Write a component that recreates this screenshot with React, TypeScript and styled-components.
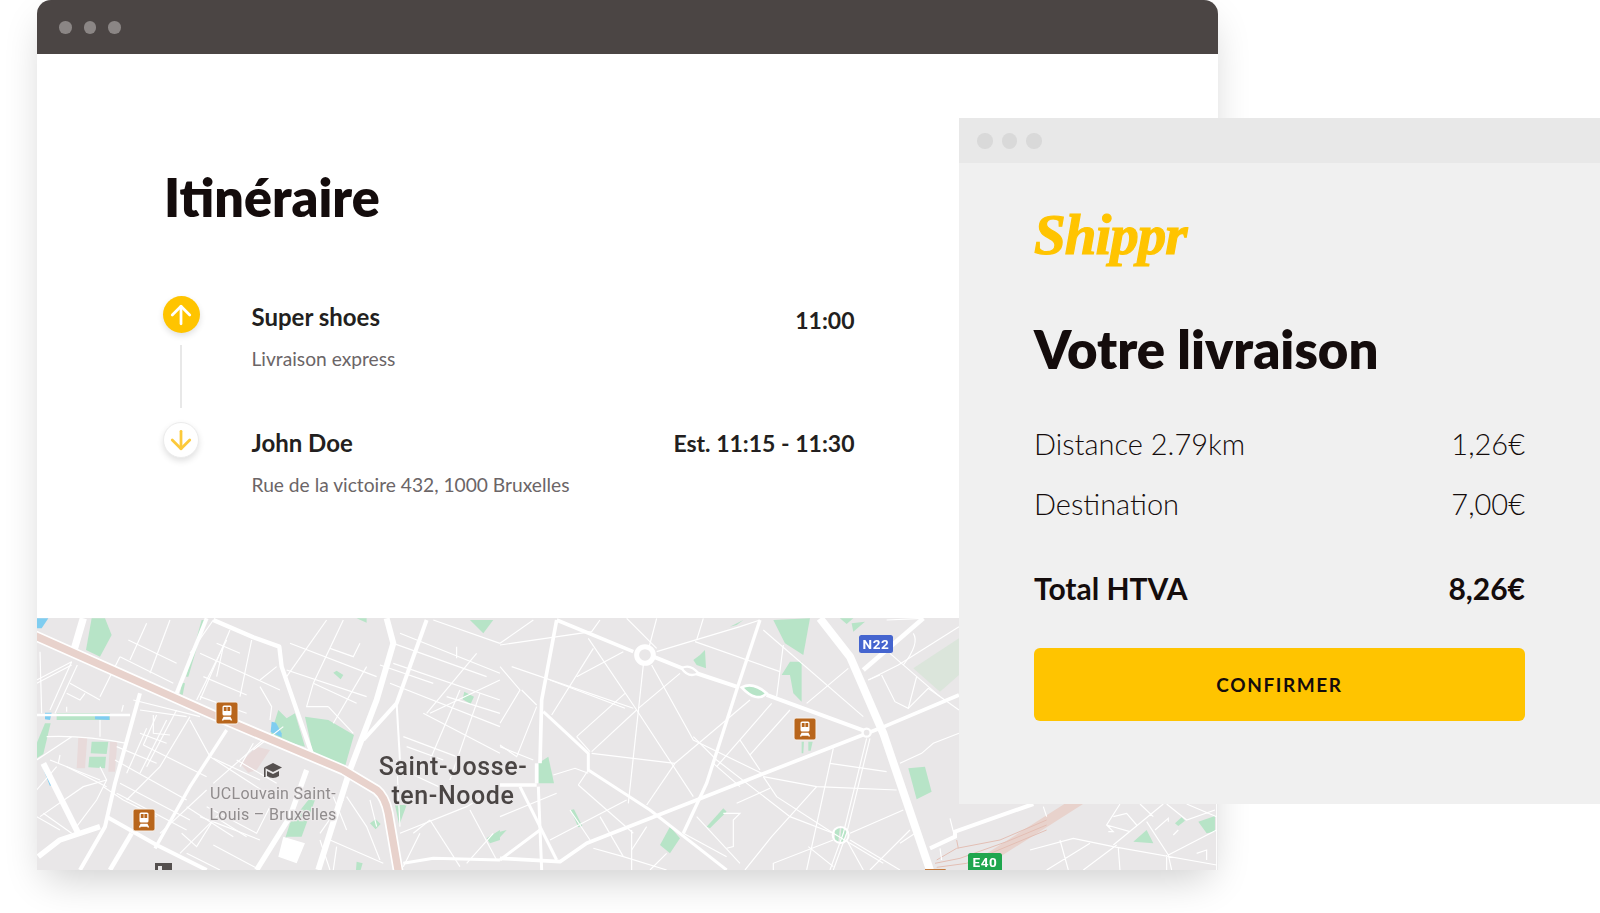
import styled, { createGlobalStyle } from 'styled-components';
import { ArrowUp, ArrowDown } from 'lucide-react';

const FONT = `Lato, 'Noto Sans', sans-serif`;

// map geometry is traced in the coordinates of 3x crops, each group has its own origin
const WHITE_A: [string, number][] = [
    ['M250,55 L222,150', 22],
    ['M620,55 L530,280', 12],
    ['M640,60 L760,112 L838,140 L845,200 L935,460', 13],
    ['M1160,55 L1180,130 L1130,300 L1050,510 L955,810', 18],
    ['M1280,60 L1190,310 L1090,420', 12],
    ['M420,280 L345,550 L315,680 L240,810', 12],
    ['M680,390 L570,560 L465,745', 10],
    ['M320,650 L470,735 L620,810', 12],
    ['M115,770 L180,720 L300,680', 16],
    ['M130,490 L235,700', 18],
    ['M920,510 L870,650 L770,810', 16],
    ['M395,700 L330,810', 14],
    ['M110,345 H390', 7],
    ['M1190,310 L1200,480', 6],
    ['M1210,790 L1300,775 L1500,780', 9],
];
const THIN_A = [
    'M110,240 L215,185', 'M110,250 L215,195', 'M215,185 L150,330', 'M232,195 L165,340', 'M120,155 L125,340',
    'M210,250 L300,300', 'M255,280 L240,300 L200,280', 'M385,120 L530,190', 'M360,170 L520,250', 'M300,290 L360,170',
    'M600,160 L840,270', 'M510,60 L450,220', 'M440,70 L390,180', 'M690,90 L600,300', 'M755,120 L720,290',
    'M140,410 Q250,405 380,430', 'M120,650 L250,560 L320,540', 'M200,500 L320,560', 'M110,570 L170,500',
    'M150,480 L300,540', 'M400,300 L600,350', 'M420,330 L560,350', 'M430,435 L620,530', 'M470,345 L430,435',
    'M530,330 L440,500', 'M570,350 L480,500 L380,600', 'M570,360 L630,470 L800,580', 'M640,475 L780,540',
    'M350,580 L560,690', 'M360,550 L570,660', 'M480,700 L620,570', 'M600,650 L780,720', 'M540,760 L660,640',
    'M640,735 L780,810', 'M1040,590 L1100,680 L1140,780', 'M990,720 L1150,790', 'M1010,740 L1000,810',
    'M1190,480 L1200,680', 'M1200,700 L1400,620 L1500,560', 'M1290,660 L1380,800', 'M1240,700 L1290,660',
    'M1140,195 L1300,250', 'M1180,130 L1460,230', 'M1200,100 L1500,220', 'M1180,190 L1500,300', 'M1170,250 L1500,380',
    'M1270,340 L1500,460', 'M1290,340 L1500,240', 'M1430,160 L1280,340', 'M1380,270 L1290,480', 'M1440,280 L1350,540',
    'M870,130 L1130,230', 'M860,210 L1100,290', 'M940,250 L1070,310', 'M980,60 L860,230', 'M1080,130 L1060,170 L990,145',
    'M1100,200 L1000,370', 'M940,250 L920,320 L985,320', 'M1030,60 L940,250', 'M985,320 L1060,400', 'M780,240 L830,200',
    'M780,260 L815,320 L810,360', 'M110,480 L215,410', 'M130,640 L215,700', 'M1410,630 L1490,780', 'M1210,800 L1260,700',
    'M1300,60 L1500,130', 'M1370,140 L1370,175', 'M570,160 L640,60', 'M850,380 L760,450', 'M1110,600 L1130,680',
    'M560,760 L660,810', 'M1030,600 L960,700', 'M1400,790 L1480,700', 'M680,120 L640,200 L590,300',
    'M350,440 L470,490', 'M420,400 L500,430', 'M440,385 L380,520', 'M500,360 L420,520', 'M345,480 L560,600',
    'M310,560 L370,600 L470,650', 'M180,690 L110,650', 'M300,500 L320,540 L290,600 L230,680', 'M810,620 L770,700 L620,620',
    'M560,620 L700,710', 'M545,700 L590,740 L640,660', 'M660,660 L740,710', 'M610,230 L740,285', 'M650,130 L720,160',
    'M600,290 L740,340', 'M670,140 L650,230', 'M800,410 L640,550', 'M710,480 L830,550', 'M760,430 L720,500',
    'M1000,590 L1040,690', 'M960,720 L990,810', 'M1340,290 L1500,340', 'M1220,440 L1330,480', 'M1230,520 L1380,590',
    'M1210,410 L1370,470', 'M300,360 V410', 'M180,465 L175,490', 'M200,320 V335', 'M370,315 L365,335', 'M460,345 V400 L510,405',
];
const WHITE_B: [string, number][] = [
    ['M170,60 L400,155', 11],
    ['M460,170 L560,210 L710,260', 12],
    ['M800,285 L1100,395', 12],
    ['M780,60 L710,270 L620,550 L550,700', 10],
    ['M170,60 L125,300 L120,490', 11],
    ['M130,335 L265,460 L265,510 L450,630 L680,810', 9],
    ['M960,55 L1050,170 L1150,400 L1290,810', 24],
    ['M1270,55 L1090,210', 14],
    ['M1377,285 L1140,385 L780,525 L590,600 L260,730 L180,785 L0,775', 11],
    ['M0,555 L110,555', 11],
    ['M110,490 L110,550', 11],
    ['M60,560 L170,780', 9],
    ['M115,560 L125,810', 9],
    ['M0,780 L120,690', 9],
];
const THIN_B = [
    'M100,60 L0,130', 'M300,60 L275,95 L0,135', 'M380,55 L470,145', 'M470,55 L445,150', 'M610,55 L590,120',
    'M470,155 L720,80 L780,60', 'M585,125 L840,215', 'M265,115 L410,330 L580,590', 'M280,145 L155,345', 'M370,155 L230,230',
    'M35,200 L400,325', 'M375,280 L230,410', 'M410,330 L275,455', 'M430,195 L385,610', 'M275,460 L525,490', 'M525,490 L750,300',
    'M455,195 L580,420 L785,520', 'M540,220 L415,325', 'M850,135 L830,290', 'M790,90 L1090,350', 'M1045,205 L920,310',
    'M815,310 L650,500', 'M870,330 L750,465', 'M580,410 L650,480 L870,650 L1000,700', 'M525,490 L440,615', 'M790,530 L830,590 L1000,700',
    'M790,530 L950,560 L1190,570', 'M990,490 L1160,515', 'M1000,445 L920,810', 'M1100,415 L1030,700 L990,810', 'M1110,415 L1040,700 L1000,810',
    'M1050,700 L1210,630', 'M950,560 L815,710 L735,810', 'M1040,720 L1090,810', 'M1050,720 L1200,810', 'M1230,690 L1110,810',
    'M0,650 L170,580', 'M235,555 L400,700', 'M235,555 L265,510', 'M380,600 L150,720', 'M160,525 L225,505 L265,520',
    'M300,650 L370,770', 'M210,630 L270,720', 'M395,690 L395,810', 'M280,745 L370,770 L500,810', 'M440,680 L395,750',
    'M500,760 L450,810', 'M590,650 L720,790', 'M670,640 H720 L700,660 V740 L680,745', 'M1105,240 L1195,195 L1377,80',
    'M1145,225 L1185,305 L1225,325 L1250,230', 'M1170,160 L1320,290', 'M1240,100 Q1260,130 1210,195', 'M1225,325 L1285,265 L1377,330',
    'M1200,490 L1265,460 L1300,430 L1377,400', 'M710,610 L810,565', 'M0,200 L60,270 L0,370', 'M65,270 L110,315', 'M0,435 L50,470 L110,320',
    'M720,420 L780,510', 'M230,410 L270,455', 'M1000,700 L1150,790', 'M820,810 L820,790 L1000,720', 'M640,490 L720,560', 'M1140,225 L1105,240',
    'M925,740 L1000,800', 'M1270,55 L1160,60', 'M150,240 L375,325', 'M550,700 L680,770', 'M0,440 L100,480',
];
const GREEN_PATCHES = [
    // first crop
    { o: 'a', p: '275,55 315,55 335,105 300,170 258,150' },
    { o: 'a', p: '810,410 835,330 860,355 885,340 915,440' },
    { o: 'a', p: '915,350 985,360 1062,405 1035,500 940,465' },
    { o: 'a', p: '170,340 330,340 330,360 170,360' },
    { o: 'a', p: '135,370 152,370 130,462 110,475 110,430' },
    { o: 'a', p: '275,425 325,425 320,462 272,460' },
    { o: 'a', p: '268,470 318,470 315,505 265,502' },
    { o: 'a', p: '1000,218 1010,212 1030,225 1022,238' },
    { o: 'a', p: '1393,275 1422,290 1412,312 1388,298' },
    { o: 'a', p: '1410,60 1480,60 1450,100' },
    { o: 'a', p: '1185,615 1220,615 1198,675' },
    { o: 'a', p: '1460,715 1500,690 1500,720 1470,730' },
    { o: 'a', p: '870,670 925,600 945,600 905,710 860,710 838,770' },
    { o: 'a', p: '1110,670 1127,658 1142,672 1127,688' },
    { o: 'a', p: '1070,785 1088,790 1082,810 1068,810' },
    { o: 'a', p: '605,60 615,60 565,230 558,230' },
    { o: 'a', p: '545,248 555,250 548,285 540,282' },
    { o: 'a', p: '1070,55 1100,55 1100,68' },
    // second crop
    { o: 'b', p: '820,60 930,55 910,165 855,130' },
    { o: 'b', p: '870,185 905,185 905,305 880,280 870,225 845,225' },
    { o: 'b', p: '1225,505 1275,500 1295,575 1250,598' },
    { o: 'b', p: '620,680 670,625 680,635 630,685' },
    { o: 'b', p: '510,680 540,715 510,760 480,735' },
    { o: 'b', p: '115,490 145,470 162,550 115,550' },
    { o: 'b', p: '580,180 600,165 615,150 618,205 590,195' },
    { o: 'b', p: '212,630 222,628 247,678 235,682' },
    { o: 'b', p: '1020,55 1060,55 1040,72' },
    { o: 'b', p: '1055,70 1095,65 1060,95' },
    { o: 'b', p: '690,80 730,60 710,75' },
    { o: 'b', p: '905,425 912,425 910,460 905,460' },
    { o: 'b', p: '925,425 938,425 932,452 925,452' },
    { o: 'b', p: '1005,690 1020,680 1015,725 1005,720' },
    { o: 'b', p: '1025,680 1040,695 1030,725 1020,725' },
    { o: 'b', p: '730,265 790,275 770,290 745,285' },
    { o: 'b', p: '0,695 20,690 0,712' },
];
const BLUE_PATCHES = [
    '110,55 145,55 125,85 110,85',
    '135,338 155,338 150,360 135,358',
    '285,345 328,347 328,360 285,358',
    '815,365 828,368 845,400 845,412 812,396',
    '125,495 135,492 160,550 150,558',
];
const TRAINS: [number, number][] = [
    [216, 702],
    [133, 809],
    [794, 718],
];

function TrainMarker({ x, y }: { x: number; y: number }) {
    return (
        <g transform={`translate(${x},${y})`}>
            <rect x="0" y="0" width="22" height="22" rx="2" fill="#b8651b" stroke="#f6f1ec" strokeWidth="1" />
            <rect x="6.5" y="3.5" width="9" height="10" rx="1.5" fill="#fff" />
            <rect x="7.8" y="5" width="2.8" height="4" fill="#b8651b" />
            <rect x="11.4" y="5" width="2.8" height="4" fill="#b8651b" />
            <path d="M6.5,18.5 L8,15.5 H14 L15.5,18.5 M7,17 H15" stroke="#fff" strokeWidth="1.5" fill="none" />
        </g>
    );
}

function MapDrawing() {
    return (
        <MapSvg viewBox="37 618 1181 252" width="1181" height="252">
            <rect x="37" y="618" width="1181" height="252" fill="#e9e7e8" />
            <g transform="translate(0,600) scale(0.3333)">
                <path d="M720,490 L770,440 L810,450 L770,510 L745,518 Z" fill="#e8dada" />
                <path d="M235,412 L262,412 L255,505 L230,505 Z M330,425 L352,425 L345,515 L325,515 Z" fill="#e8dada" />
                {GREEN_PATCHES.filter((g) => g.o === 'a').map((g) => (
                    <polygon key={g.p} points={g.p} fill="#b7e4c7" />
                ))}
                {BLUE_PATCHES.map((p) => (
                    <polygon key={p} points={p} fill="#7fcdf0" />
                ))}
                {THIN_A.map((d) => (
                    <path key={d} d={d} stroke="#fff" strokeWidth="3.5" fill="none" />
                ))}
                {WHITE_A.map(([d, w]) => (
                    <path key={d} d={d} stroke="#fff" strokeWidth={w} fill="none" strokeLinejoin="round" />
                ))}
                <path d="M850,710 L915,730 L890,790 L835,770 Z" fill="#fff" />
                <path
                    d="M100,105 L640,345 L1030,510 L1130,570 Q1155,590 1165,640 L1195,815"
                    stroke="#fff"
                    strokeWidth="32"
                    fill="none"
                />
                <path
                    d="M100,105 L640,345 L1030,510 L1130,570 Q1155,590 1165,640 L1195,815"
                    stroke="#e8d2cc"
                    strokeWidth="22"
                    fill="none"
                />
            </g>
            <g transform="translate(500,600) scale(0.3333)">
                <polygon points="1240,205 1377,115 1377,225 1320,275" fill="#dbe5db" />
                {GREEN_PATCHES.filter((g) => g.o === 'b').map((g) => (
                    <polygon key={g.p} points={g.p} fill="#b7e4c7" />
                ))}
                {THIN_B.map((d) => (
                    <path key={d} d={d} stroke="#fff" strokeWidth="3.5" fill="none" />
                ))}
                {WHITE_B.map(([d, w]) => (
                    <path key={d} d={d} stroke="#fff" strokeWidth={w} fill="none" strokeLinejoin="round" />
                ))}
                <circle cx="435" cy="165" r="25" stroke="#fff" strokeWidth="15" fill="#e9e7e8" />
                <path d="M725,262 Q760,245 800,280 Q770,310 725,262 Z" fill="#b7e4c7" stroke="#fff" strokeWidth="8" />
                <path d="M545,205 Q570,190 595,220 Q565,235 545,205 Z" fill="#e9e7e8" stroke="#fff" strokeWidth="7" />
                <circle cx="1022" cy="705" r="24" stroke="#fff" strokeWidth="6" fill="none" />
                <circle cx="1100" cy="398" r="12" stroke="#fff" strokeWidth="7" fill="#e9e7e8" />
            </g>
            <g transform="translate(900,780) scale(0.3333)">
                <polygon points="700,185 740,150 760,190" fill="#b7e4c7" />
                <polygon points="825,130 845,112 855,122 835,138" fill="#b7e4c7" />
                <polygon points="895,125 945,108 945,155 920,160" fill="#b7e4c7" />
                <path d="M210,270 L540,60" stroke="#e8d2cc" strokeWidth="30" fill="none" />
                <path
                    d="M110,240 L170,205 L300,180 L440,120 M105,250 L180,235 L320,185 L440,135 M110,262 L200,250 L440,150 M170,180 L175,205"
                    stroke="#e3bfb5"
                    strokeWidth="3"
                    fill="none"
                />
                <path d="M90,205 L165,170 L165,155 L400,72" stroke="#fff" strokeWidth="12" fill="none" />
                <path
                    d="M390,210 L520,175 L640,200 L950,255 M550,270 L650,195 M660,72 L620,135 L690,155 M640,195 L790,72 M480,180 L505,270 M655,205 L660,270 M740,125 L805,225 L815,270 M805,225 L950,150 M800,225 L800,270 M860,72 L950,110 M640,110 L680,100 L710,135 M720,72 L760,110 M890,220 L920,210 V240 M440,270 L570,190 M620,135 L640,155 L625,155 M765,150 L805,115 V125 M820,165 L835,150 M150,115 L160,155 M120,205 L125,240 M430,80 L440,110 M0,190 L60,150 M800,72 L860,120 L945,90"
                    stroke="#fff"
                    strokeWidth="3.5"
                    fill="none"
                />
                <path d="M950,72 V270" stroke="#fff" strokeWidth="3" fill="none" />
                <rect x="75" y="267" width="62" height="6" fill="#c47a3c" />
            </g>
            {TRAINS.map(([x, y]) => (
                <TrainMarker key={x} x={x} y={y} />
            ))}
            <g transform="translate(264,763)">
                <path d="M9,0 L18,4.5 L9,9 L0,4.5 Z" fill="#55504f" />
                <path d="M3,8 V13 Q9,17 15,13 V8 L9,11 Z" fill="#55504f" />
                <rect x="0" y="5" width="1.6" height="9" fill="#55504f" />
            </g>
            <path d="M155,863 h17 v7 h-17 z M158,866 h4 v4 h-4 z" fill="#55504f" fillRule="evenodd" />
            <BlockLabel x="453" y="775">Saint-Josse-</BlockLabel>
            <BlockLabel x="453" y="804">ten-Noode</BlockLabel>
            <PoiLabel x="273" y="799">UCLouvain Saint-</PoiLabel>
            <PoiLabel x="273" y="820">Louis – Bruxelles</PoiLabel>
            <rect x="859" y="635" width="34" height="18" rx="2.5" fill="#4565cf" />
            <RoadNumber x="876" y="649">N22</RoadNumber>
            <rect x="968" y="853" width="34" height="19" rx="2.5" fill="#1fa64e" />
            <RoadNumber x="985" y="867">E40</RoadNumber>
        </MapSvg>
    );
}

export default function App() {
    return (
        <Page>
            <GlobalStyle />
            <MainWindow>
                <TitleBar $dark>
                    <Dot $dark />
                    <Dot $dark />
                    <Dot $dark />
                </TitleBar>
                <Content>
                    <Title>Itinéraire</Title>
                    <Stops>
                        <Stop>
                            <Rail>
                                <StopIcon $filled>
                                    <ArrowUp size={30} strokeWidth={2.2} color="#fff" />
                                </StopIcon>
                                <Connector />
                            </Rail>
                            <StopText>
                                <StopName>Super shoes</StopName>
                                <StopDetail>Livraison express</StopDetail>
                            </StopText>
                            <StopTime $low>11:00</StopTime>
                        </Stop>
                        <Stop>
                            <Rail>
                                <StopIcon>
                                    <ArrowDown size={30} strokeWidth={2.2} color="#fcc93a" />
                                </StopIcon>
                            </Rail>
                            <StopText>
                                <StopName>John Doe</StopName>
                                <StopDetail>Rue de la victoire 432, 1000 Bruxelles</StopDetail>
                            </StopText>
                            <StopTime>Est. 11:15 - 11:30</StopTime>
                        </Stop>
                    </Stops>
                </Content>
                <MapArea>
                    <MapDrawing />
                </MapArea>
            </MainWindow>
            <SummaryWindow>
                <TitleBar>
                    <Dot />
                    <Dot />
                    <Dot />
                </TitleBar>
                <SummaryBody>
                    <Logo>Shippr</Logo>
                    <SummaryTitle>Votre livraison</SummaryTitle>
                    <PriceRow>
                        <span>Distance 2.79km</span>
                        <span>1,26€</span>
                    </PriceRow>
                    <PriceRow>
                        <span>Destination</span>
                        <span>7,00€</span>
                    </PriceRow>
                    <TotalRow>
                        <span>Total HTVA</span>
                        <span>8,26€</span>
                    </TotalRow>
                    <ConfirmButton>CONFIRMER</ConfirmButton>
                </SummaryBody>
            </SummaryWindow>
        </Page>
    );
}

const GlobalStyle = createGlobalStyle`
    html, body {
        margin: 0;
        padding: 0;
        background: #fff;
    }
`;
const Page = styled.div`
    position: relative;
    width: 1600px;
    height: 913px;
    overflow: hidden;
    padding-left: 37px;
    box-sizing: border-box;
    font-family: ${FONT};
    background: #fff;
`;
const MainWindow = styled.div`
    display: flex;
    flex-direction: column;
    width: 1181px;
    height: 870px;
    background: #fff;
    border-radius: 14px 14px 0 0;
    box-shadow: 0 16px 40px -8px rgba(0, 0, 0, 0.2);
`;
const TitleBar = styled.div<{ $dark?: boolean }>`
    display: flex;
    flex: none;
    align-items: center;
    gap: ${(props) => (props.$dark ? '12px' : '9px')};
    height: ${(props) => (props.$dark ? '54px' : '45px')};
    padding-left: ${(props) => (props.$dark ? '22px' : '18px')};
    padding-top: ${(props) => (props.$dark ? '0' : '1px')};
    box-sizing: border-box;
    background: ${(props) => (props.$dark ? '#4b4544' : '#e8e8e8')};
    border-radius: ${(props) => (props.$dark ? '14px 14px 0 0' : '0')};
`;
const Dot = styled.span<{ $dark?: boolean }>`
    width: ${(props) => (props.$dark ? '12.5px' : '15.5px')};
    height: ${(props) => (props.$dark ? '12.5px' : '15.5px')};
    margin-top: ${(props) => (props.$dark ? '1px' : '0')};
    border-radius: 50%;
    background: ${(props) => (props.$dark ? '#8b8685' : '#d9d9d9')};
`;
const Content = styled.div`
    flex: 1;
    padding: 111px 0 0 125px;
`;
const Title = styled.h1`
    margin: 0 0 67px 2px;
    font-size: 52px;
    line-height: 64px;
    font-weight: 800;
    color: #140c0c;
`;
const Stops = styled.div`
    display: flex;
    flex-direction: column;
    width: 692.5px;
`;
const Stop = styled.div`
    display: grid;
    grid-template-columns: 89.5px 1fr auto;
    height: 126px;
`;
const Rail = styled.div`
    display: flex;
    flex-direction: column;
    align-items: center;
    width: 38px;
`;
const StopIcon = styled.div<{ $filled?: boolean }>`
    display: flex;
    flex: none;
    align-items: center;
    justify-content: center;
    width: ${(props) => (props.$filled ? '37px' : '36px')};
    height: ${(props) => (props.$filled ? '37px' : '36px')};
    box-sizing: border-box;
    border-radius: 50%;
    background: ${(props) => (props.$filled ? '#ffc400' : '#fff')};
    border: ${(props) => (props.$filled ? 'none' : '1px solid #ececec')};
    box-shadow: 0 3px 6px rgba(0, 0, 0, 0.12);
`;
const Connector = styled.div`
    flex: none;
    width: 2px;
    height: 63px;
    margin-top: 12px;
    background: #e8e8e8;
`;
const StopText = styled.div`
    padding-top: 7px;
`;
const StopName = styled.div`
    font-size: 24px;
    line-height: 28px;
    font-weight: 700;
    color: #231f20;
`;
const StopDetail = styled.div`
    margin-top: 16px;
    font-size: 19.2px;
    line-height: 24px;
    font-weight: 400;
    color: #6b6567;
`;
const StopTime = styled.div<{ $low?: boolean }>`
    padding-top: ${(props) => (props.$low ? '10px' : '7px')};
    font-size: 23px;
    line-height: 28px;
    font-weight: 700;
    color: #231f20;
`;
const MapArea = styled.div`
    flex: none;
    height: 252px;
`;
const MapSvg = styled.svg`
    display: block;
    filter: blur(0.35px);
`;
const BlockLabel = styled.text`
    font-family: Roboto, sans-serif;
    font-size: 25px;
    font-weight: 500;
    letter-spacing: 0.6px;
    text-anchor: middle;
    fill: #4a4544;
    stroke: #e9e7e8;
    stroke-width: 3px;
    paint-order: stroke;
`;
const PoiLabel = styled.text`
    font-family: Roboto, sans-serif;
    font-size: 16px;
    letter-spacing: 0.3px;
    text-anchor: middle;
    fill: #908c8d;
    stroke: #ece9ea;
    stroke-width: 2.5px;
    paint-order: stroke;
`;
const RoadNumber = styled.text`
    font-family: Roboto, sans-serif;
    font-size: 13.5px;
    font-weight: 700;
    letter-spacing: 0.6px;
    text-anchor: middle;
    fill: #fff;
`;
const SummaryWindow = styled.div`
    position: absolute;
    top: 118px;
    right: 0;
    width: 641px;
    height: 686px;
    background: #f0f0f0;
`;
const SummaryBody = styled.div`
    display: flex;
    flex-direction: column;
    padding: 42px 75px 0;
`;
const Logo = styled.div`
    height: 66px;
    font-family: 'Liberation Serif', serif;
    font-style: italic;
    font-weight: 700;
    font-size: 57px;
    line-height: 60px;
    letter-spacing: -1px;
    color: #ffc400;
    -webkit-text-stroke: 1.2px #ffc400;
`;
const SummaryTitle = styled.h2`
    margin: 46px 0 41px;
    font-size: 52.6px;
    line-height: 64px;
    font-weight: 800;
    color: #140c0c;
`;
const PriceRow = styled.div`
    display: flex;
    justify-content: space-between;
    height: 60px;
    font-size: 29px;
    line-height: 44px;
    font-weight: 300;
    color: #140c0c;
`;
const TotalRow = styled(PriceRow)`
    height: auto;
    margin-top: 24px;
    font-size: 30px;
    font-weight: 700;
`;
const ConfirmButton = styled.button`
    height: 73px;
    margin-top: 38px;
    border: none;
    border-radius: 6px;
    background: #ffc400;
    font-family: ${FONT};
    font-size: 19px;
    font-weight: 700;
    letter-spacing: 1.6px;
    color: #140c0c;
`;
